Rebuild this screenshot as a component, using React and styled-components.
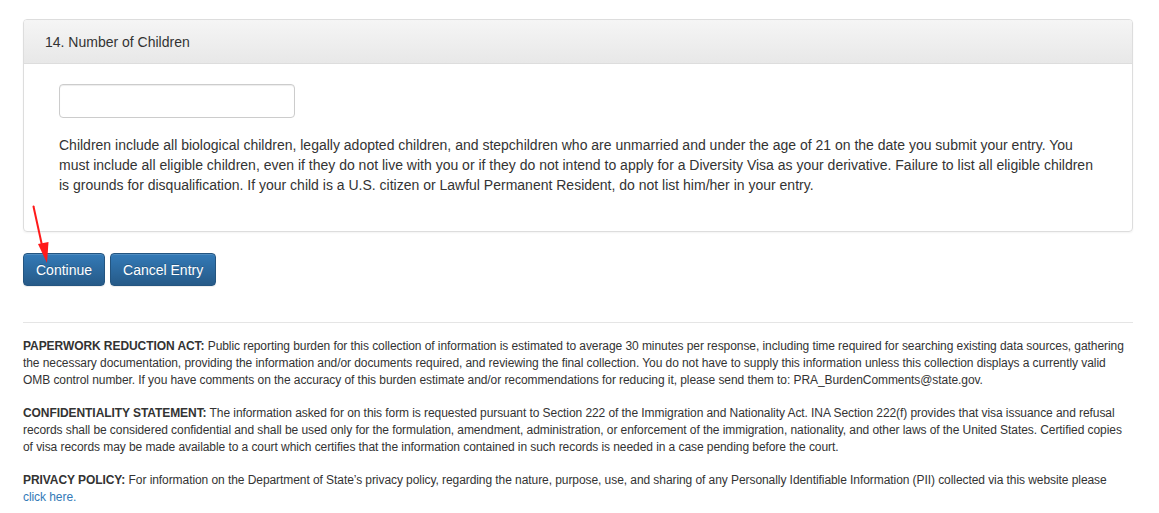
import React from 'react';
import styled, { createGlobalStyle } from 'styled-components';

const GlobalStyle = createGlobalStyle`
  body {
    margin: 0;
    background: #fff;
    font-family: "Liberation Sans", Arial, sans-serif;
    color: #333;
  }
`;

const Page = styled.div`
  position: relative;
  width: 1110px;
  margin-left: 23px;
  padding-top: 19px;
`;

const Panel = styled.section`
  border: 1px solid #ddd;
  border-radius: 4px;
  box-shadow: 0 1px 2px rgba(0, 0, 0, 0.05);
`;

const PanelHeading = styled.div`
  height: 44px;
  box-sizing: border-box;
  padding: 0 21px;
  display: flex;
  align-items: center;
  font-size: 14px;
  background: linear-gradient(to bottom, #f5f5f5 0%, #e8e8e8 100%);
  border-bottom: 1px solid #ddd;
  border-radius: 3px 3px 0 0;
`;

const PanelBody = styled.div`
  padding: 20px 35px 36px 35px;
`;

const TextInput = styled.input`
  display: block;
  width: 236px;
  height: 34px;
  box-sizing: border-box;
  border: 1px solid #ccc;
  border-radius: 4px;
  box-shadow: inset 0 1px 1px rgba(0, 0, 0, 0.075);
  margin-bottom: 17px;
  padding: 6px 12px;
  font-size: 14px;
`;

const HelpText = styled.p`
  margin: 0;
  font-size: 14px;
  line-height: 20px;
`;

const Actions = styled.div`
  display: flex;
  gap: 5px;
  margin-top: 21px;
`;

const Button = styled.button`
  height: 33px;
  padding: 0 12px;
  font-family: "Liberation Sans", Arial, sans-serif;
  font-size: 14px;
  color: #fff;
  text-shadow: 0 -1px 0 rgba(0, 0, 0, 0.2);
  background: linear-gradient(to bottom, #337ab7 0%, #265a88 100%);
  border: 1px solid #245580;
  border-radius: 4px;
  box-shadow: inset 0 1px 0 rgba(255, 255, 255, 0.15), 0 1px 1px rgba(0, 0, 0, 0.075);
  cursor: pointer;
`;

const Rule = styled.hr`
  margin: 36px 0 15px;
  border: 0;
  border-top: 1px solid #e5e5e5;
`;

const Notice = styled.p`
  margin: 0 0 16px;
  font-size: 12px;
  line-height: 17px;
  letter-spacing: -0.07px;
`;

const Label = styled.strong`
  font-weight: bold;
`;

const FooterLink = styled.a`
  color: #337ab7;
  text-decoration: none;
  white-space: nowrap;
`;

const Pointer = styled.svg`
  position: absolute;
  left: 0;
  top: 186px;
  pointer-events: none;
`;

export default function App() {
  return (
    <>
      <GlobalStyle />
      <Page>
        <Panel>
          <PanelHeading>14. Number of Children</PanelHeading>
          <PanelBody>
            <TextInput type="text" />
            <HelpText>
              Children include all biological children, legally adopted children, and stepchildren who are
              unmarried and under the age of 21 on the date you submit your entry. You must include all
              eligible children, even if they do not live with you or if they do not intend to apply for a
              Diversity Visa as your derivative. Failure to list all eligible children is grounds for
              disqualification. If your child is a U.S. citizen or Lawful Permanent Resident, do not list
              him/her in your entry.
            </HelpText>
          </PanelBody>
        </Panel>

        <Actions>
          <Button type="button">Continue</Button>
          <Button type="button">Cancel Entry</Button>
        </Actions>

        <Rule />

        <Notice>
          <Label>PAPERWORK REDUCTION ACT:</Label> Public reporting burden for this collection of information is
          estimated to average 30 minutes per response, including time required for searching existing data
          sources, gathering the necessary documentation, providing the information and/or documents required,
          and reviewing the final collection. You do not have to supply this information unless this collection
          displays a currently valid OMB control number. If you have comments on the accuracy of this burden
          estimate and/or recommendations for reducing it, please send them to: PRA_BurdenComments@state.gov.
        </Notice>
        <Notice>
          <Label>CONFIDENTIALITY STATEMENT:</Label> The information asked for on this form is requested pursuant
          to Section 222 of the Immigration and Nationality Act. INA Section 222(f) provides that visa issuance
          and refusal records shall be considered confidential and shall be used only for the formulation,
          amendment, administration, or enforcement of the immigration, nationality, and other laws of the
          United States. Certified copies of visa records may be made available to a court which certifies that
          the information contained in such records is needed in a case pending before the court.
        </Notice>
        <Notice>
          <Label>PRIVACY POLICY:</Label> For information on the Department of State’s privacy policy, regarding
          the nature, purpose, use, and sharing of any Personally Identifiable Information (PII) collected via
          this website please <FooterLink href="#">click here.</FooterLink>
        </Notice>

        {/* red annotation arrow pointing at Continue */}
        <Pointer width="40" height="80" viewBox="0 0 40 80">
          <path d="M10.5 20.5 L20 64" stroke="#ff1a1a" strokeWidth="2" strokeLinecap="round" />
          <polygon points="15,58 25.5,56 24,77" fill="#ff1a1a" />
        </Pointer>
      </Page>
    </>
  );
}
